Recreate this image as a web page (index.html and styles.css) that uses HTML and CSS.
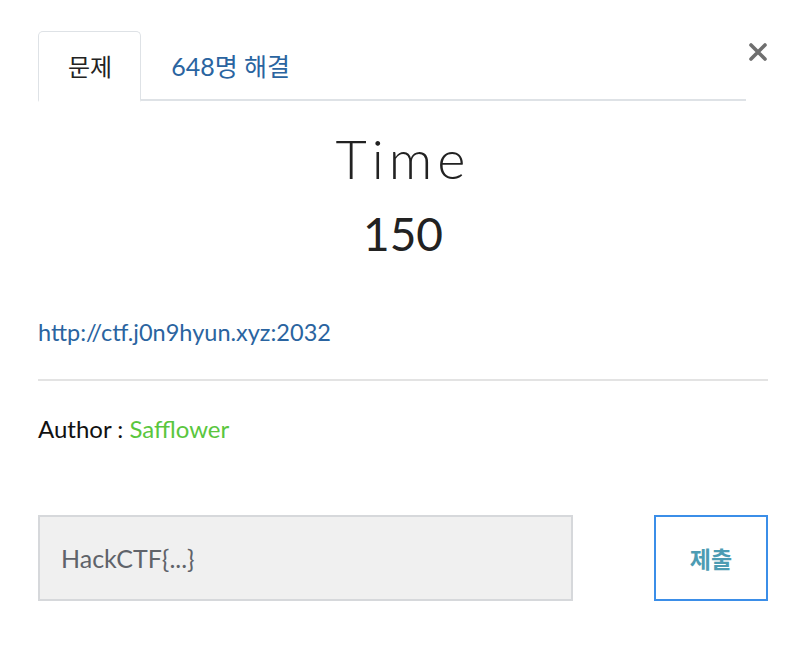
FILE: index.html
```html
<!DOCTYPE html>
<html lang="ko">
<head>
<meta charset="utf-8">
<link rel="stylesheet" href="styles.css">
</head>
<body>
<div class="modal">
  <div class="header">
    <ul class="tabs">
      <li class="tab active">문제</li>
      <li class="tab">648명 해결</li>
    </ul>
    <button class="close" aria-label="close">
      <svg width="20" height="20" viewBox="0 0 20 20"><path d="M3 3 L17 17 M17 3 L3 17" stroke="#6f6f6f" stroke-width="3.6" stroke-linecap="round"/></svg>
    </button>
  </div>
  <h1 class="title">Time</h1>
  <div class="points">150</div>
  <a class="link" href="#">http://ctf.j0n9hyun.xyz:2032</a>
  <hr class="rule">
  <p class="author">Author : <span class="name">Safflower</span></p>
  <form class="submit-row">
    <input class="flag" type="text" placeholder="HackCTF{...}">
    <button class="submit" type="button">제출</button>
  </form>
</div>
</body>
</html>
```

FILE: styles.css
```css
html, body {
  margin: 0;
  padding: 0;
  background: #fff;
}
body {
  font-family: Lato, "Noto Sans CJK KR", sans-serif;
  color: #212529;
}
.modal {
  padding: 31px 32px 0 38px;
}
.header {
  display: flex;
  align-items: flex-start;
}
.tabs {
  list-style: none;
  margin: 0;
  padding: 0;
  display: flex;
  width: 708px;
  border-bottom: 2px solid #dee2e6;
  height: 68px;
}
.tab {
  font-family: "Noto Sans CJK KR", sans-serif;
  font-size: 24px;
  padding: 0 28px 0 29px;
  line-height: 68px;
  color: #2a64a0;
  border: 1px solid transparent;
  border-radius: 5px 5px 0 0;
  margin-bottom: -2px;
  height: 68px;
}
.tab.active {
  color: #222;
  background: #fff;
  border-color: #dee2e6;
  border-bottom: 2px solid #fff;
  height: 68px;
}
.tab:not(.active) {
  font-family: Lato, "Noto Sans CJK KR", sans-serif;
  font-size: 25px;
  padding-left: 29px;
}
.close {
  background: none;
  border: 0;
  padding: 0;
  margin: 11px 0 0 2px;
  width: 20px;
  height: 20px;
  cursor: pointer;
}
.close svg {
  display: block;
}
.title {
  margin: 26px 0 0;
  text-align: center;
  font-family: Lato, sans-serif;
  font-weight: 300;
  font-size: 54px;
  letter-spacing: 5px;
  line-height: 1.2;
  color: #222;
}
.points {
  text-align: center;
  font-size: 46px;
  font-weight: 400;
  line-height: 1.2;
  margin-top: 14px;
  color: #222;
}
.link {
  display: block;
  margin-top: 57px;
  font-size: 23.5px;
  color: #2a64a0;
  text-decoration: none;
  line-height: 1.2;
}
.rule {
  border: 0;
  border-top: 2px solid #e3e3e3;
  margin: 33px 0 0;
  width: 730px;
}
.author {
  margin: 34px 0 0;
  font-size: 24px;
  color: #111;
  line-height: 1.2;
}
.name {
  color: #5ac63e;
}
.submit-row {
  display: flex;
  justify-content: space-between;
  width: 730px;
  margin-top: 71px;
}
.flag {
  box-sizing: border-box;
  width: 535px;
  height: 86px;
  background: #f0f0f0;
  border: 2px solid #d6d8db;
  padding: 0 21px;
  font-family: Lato, sans-serif;
  font-size: 25px;
  color: #555;
  outline: none;
}
.flag::placeholder {
  color: #5f636a;
}
.submit {
  box-sizing: border-box;
  width: 114px;
  height: 86px;
  background: #fff;
  border: 2px solid #3b8ee8;
  font-family: "Noto Sans CJK KR", sans-serif;
  font-weight: 700;
  font-size: 23px;
  color: #4d9cb3;
  cursor: pointer;
}
```
